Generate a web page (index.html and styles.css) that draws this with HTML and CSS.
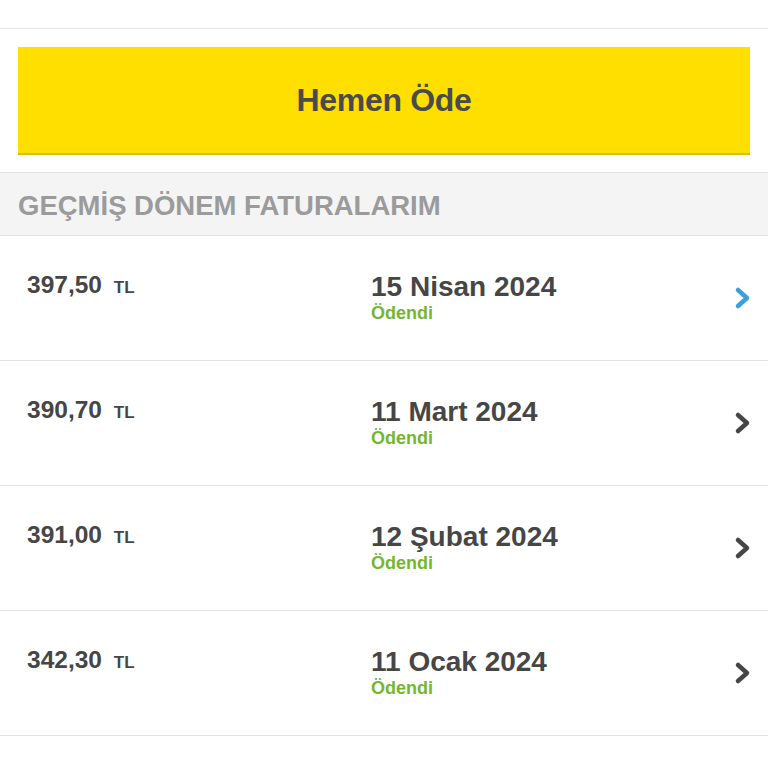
FILE: index.html
```html
<!DOCTYPE html>
<html>
<head>
  <meta charset="UTF-8">
  <title>Faturalarım</title>
  <link rel="stylesheet" href="styles.css">
</head>
<body>
  <div class="top-strip"></div>

  <div class="pay-section">
    <button class="pay-button">Hemen Öde</button>
  </div>

  <div class="section-header">GEÇMİŞ DÖNEM FATURALARIM</div>

  <div class="bill-list">
    <div class="bill-row">
      <div class="amount">397,50 <span class="currency">TL</span></div>
      <div class="bill-info">
        <div class="bill-date">15 Nisan 2024</div>
        <div class="bill-status">Ödendi</div>
      </div>
      <svg class="chevron active" width="20" height="26" viewBox="0 0 20 26"><polyline points="6,5 15,13 6,21" /></svg>
    </div>

    <div class="bill-row">
      <div class="amount">390,70 <span class="currency">TL</span></div>
      <div class="bill-info">
        <div class="bill-date">11 Mart 2024</div>
        <div class="bill-status">Ödendi</div>
      </div>
      <svg class="chevron" width="20" height="26" viewBox="0 0 20 26"><polyline points="6,5 15,13 6,21" /></svg>
    </div>

    <div class="bill-row">
      <div class="amount">391,00 <span class="currency">TL</span></div>
      <div class="bill-info">
        <div class="bill-date">12 Şubat 2024</div>
        <div class="bill-status">Ödendi</div>
      </div>
      <svg class="chevron" width="20" height="26" viewBox="0 0 20 26"><polyline points="6,5 15,13 6,21" /></svg>
    </div>

    <div class="bill-row">
      <div class="amount">342,30 <span class="currency">TL</span></div>
      <div class="bill-info">
        <div class="bill-date">11 Ocak 2024</div>
        <div class="bill-status">Ödendi</div>
      </div>
      <svg class="chevron" width="20" height="26" viewBox="0 0 20 26"><polyline points="6,5 15,13 6,21" /></svg>
    </div>
  </div>
</body>
</html>
```

FILE: styles.css
```css
body {
  margin: 0;
  font-family: "Liberation Sans", Arial, sans-serif;
  background-color: #fff;
  color: #464646;
}
.top-strip {
  height: 28px;
  border-bottom: 1px solid #e6e6e6;
}
.pay-section {
  padding: 18px 18px 17px;
}
.pay-button {
  display: flex;
  align-items: center;
  justify-content: center;
  width: 100%;
  height: 108px;
  background-color: #ffdf00;
  border: none;
  border-bottom: 2px solid #dcbc10;
  font-family: "Liberation Sans", Arial, sans-serif;
  font-size: 32px;
  font-weight: bold;
  color: #4a4a4a;
  letter-spacing: -0.3px;
  cursor: pointer;
}
.section-header {
  display: flex;
  align-items: center;
  height: 64px;
  padding-left: 18px;
  padding-top: 4px;
  box-sizing: border-box;
  background-color: #f4f4f4;
  border-top: 1px solid #e2e2e2;
  border-bottom: 1px solid #e2e2e2;
  font-size: 27.5px;
  font-weight: bold;
  color: #9b9b9b;
}
.bill-row {
  display: flex;
  align-items: flex-start;
  height: 125px;
  box-sizing: border-box;
  padding: 35px 16px 0 27px;
  border-bottom: 1px solid #e2e2e2;
}
.amount {
  width: 344px;
  font-size: 24.5px;
  line-height: 28px;
  font-weight: bold;
}
.currency {
  font-size: 17px;
  margin-left: 5px;
}
.bill-info {
  flex-grow: 1;
}
.bill-date {
  font-size: 28px;
  line-height: 32px;
  font-weight: bold;
}
.bill-status {
  font-size: 18px;
  line-height: 20px;
  font-weight: bold;
  color: #74b72e;
}
.chevron {
  align-self: center;
  margin-top: -35px;
  fill: none;
  stroke: #464646;
  stroke-width: 4.5;
  stroke-linecap: round;
  stroke-linejoin: round;
}
.chevron.active {
  stroke: #3aa0dc;
}
```
